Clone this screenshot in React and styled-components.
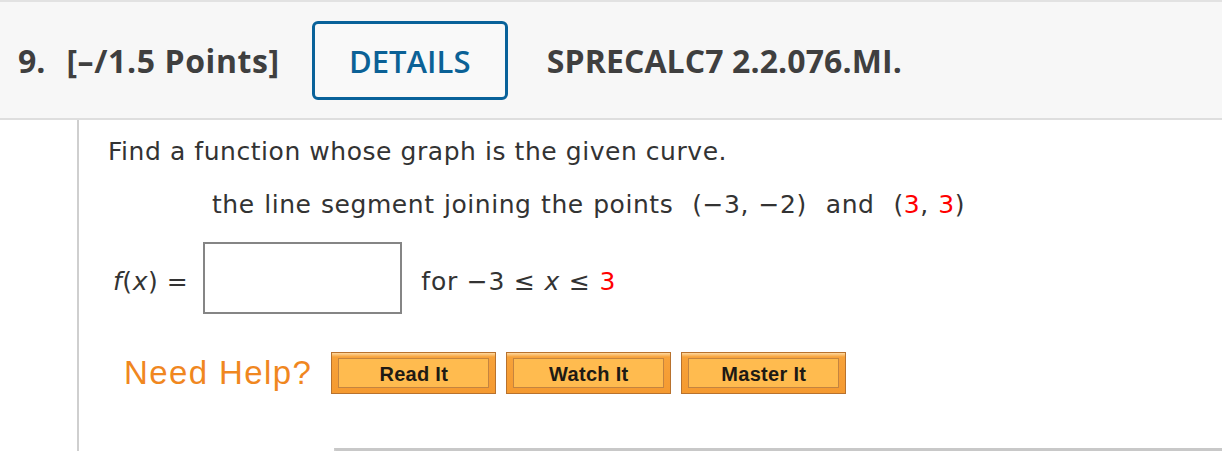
import React from 'react'
import styled, { createGlobalStyle } from 'styled-components'

const GlobalStyle = createGlobalStyle`
  html, body {
    margin: 0;
    padding: 0;
    background: #ffffff;
  }
  body {
    font-family: "DejaVu Sans", Verdana, sans-serif;
  }
`

export default function App() {
  return (
    <>
      <GlobalStyle />
      <Page>
        <Header>
          <QNum>9.</QNum>
          <Points>[–/1.5 Points]</Points>
          <DetailsButton>DETAILS</DetailsButton>
          <Code>SPRECALC7 2.2.076.MI.</Code>
        </Header>
        <Body>
          <Content>
            <Prompt>Find a function whose graph is the given curve.</Prompt>
            <Given>
              the line segment joining the points&nbsp; (−3, −2) &nbsp;and&nbsp; (<Red>3</Red>, <Red>3</Red>)
            </Given>
            <AnswerRow>
              <Fx><i>f</i>(<i>x</i>) =</Fx>
              <AnswerBox type="text" />
              <Range>for −3 ≤ <i>x</i> ≤ <Red>3</Red></Range>
            </AnswerRow>
            <HelpRow>
              <NeedHelp>Need Help?</NeedHelp>
              <HelpButton><span>Read It</span></HelpButton>
              <HelpButton><span>Watch It</span></HelpButton>
              <HelpButton><span>Master It</span></HelpButton>
            </HelpRow>
            <NextBox />
          </Content>
        </Body>
      </Page>
    </>
  )
}

const Page = styled.div`
  width: 1222px;
  height: 451px;
  overflow: hidden;
  border-top: 2px solid #e2e2e2;
  box-sizing: border-box;
`

const Header = styled.div`
  display: flex;
  align-items: center;
  height: 116px;
  background: #f7f7f7;
  border-bottom: 2px solid #dedede;
  padding-left: 18px;
  font-family: "Open Sans", sans-serif;
  font-weight: 700;
  color: #3f3f3f;
  font-size: 32px;
`

const QNum = styled.span`
  margin-right: 21px;
`

const Points = styled.span`
  letter-spacing: 0.6px;
  margin-right: 32px;
`

const DetailsButton = styled.button`
  width: 196px;
  height: 79px;
  box-sizing: border-box;
  border: 3px solid #09629a;
  border-radius: 6px;
  background: #f9f9f9;
  color: #0b6196;
  font-family: "Open Sans", sans-serif;
  font-weight: 600;
  font-size: 31px;
  margin-right: 39px;
  padding: 0;
  margin-top: 1px;
`

const Code = styled.span`
  letter-spacing: 0.1px;
`

const Body = styled.div`
  display: flex;
  padding-left: 77px;
`

const Content = styled.div`
  flex: 1;
  border-left: 2px solid #cfcfcf;
  height: 340px;
  padding-left: 29px;
  color: #333333;
  font-size: 25px;
  letter-spacing: 0.55px;
`

const Prompt = styled.div`
  margin-top: 17px;
  line-height: 30px;
`

const Given = styled.div`
  margin-top: 23px;
  margin-left: 104px;
  line-height: 30px;
  word-spacing: 1px;
`

const Red = styled.span`
  color: #ff0000;
`

const AnswerRow = styled.div`
  display: flex;
  align-items: center;
  margin-top: 22px;
`

const Fx = styled.span`
  margin-left: 5px;
  margin-right: 15px;
  padding-top: 7px;
`

const AnswerBox = styled.input`
  width: 199px;
  height: 72px;
  box-sizing: border-box;
  border: 2px solid #858585;
  margin: 0 19px 0 0;
  padding: 0;
  background: #ffffff;
`

const Range = styled.span`
  padding-top: 7px;
  letter-spacing: 0.8px;
`

const HelpRow = styled.div`
  display: flex;
  align-items: center;
  gap: 10px;
  margin-top: 38px;
  margin-left: 16px;
`

const NeedHelp = styled.span`
  font-family: "Liberation Sans", Arial, sans-serif;
  font-size: 33px;
  letter-spacing: 1.4px;
  color: #f0871f;
  margin-right: 9px;
`

const HelpButton = styled.button`
  width: 165px;
  height: 42px;
  box-sizing: border-box;
  border: 1px solid #b8722e;
  background: linear-gradient(#ffd9a0 0, #f7a23a 4px, #f59a30 100%);
  padding: 4px;
  font-family: "Liberation Sans", Arial, sans-serif;
  font-weight: 700;
  font-size: 20px;
  letter-spacing: 0.3px;
  color: #1e1a14;
  cursor: pointer;
  display: flex;
  align-items: center;
  justify-content: center;
  position: relative;
  &::before {
    content: "";
    position: absolute;
    inset: 5px 6px;
    border: 1px solid #c5843f;
    background: #ffbb4f;
  }
  & > span {
    position: relative;
    top: 1px;
  }
`

const NextBox = styled.div`
  margin-top: 54px;
  margin-left: 226px;
  height: 10px;
  border-top: 3px solid #c8c8c8;
  border-left: 2px solid #d0d0d0;
`
